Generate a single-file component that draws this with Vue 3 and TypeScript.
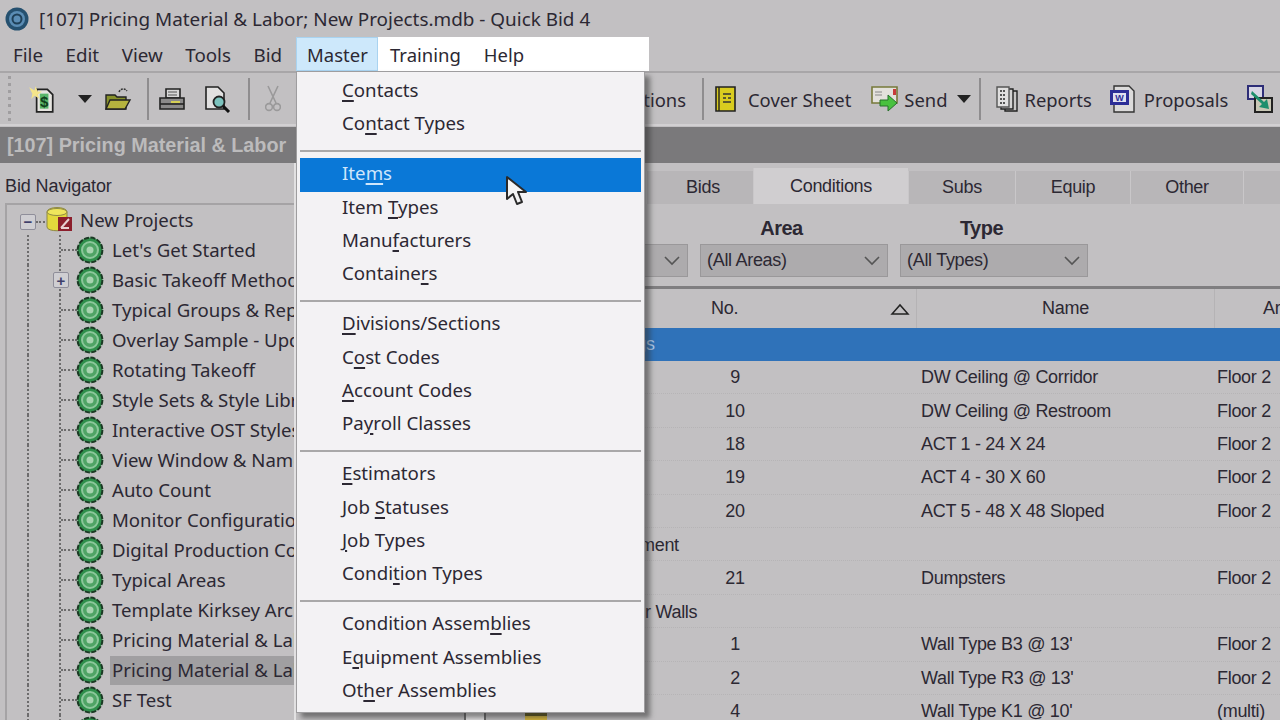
<script setup lang="ts">
interface MenuItem {
  label: string
  key: number
}

// les groupes du menu Master, key = index de la lettre soulignée
const menuGroups: MenuItem[][] = [
  [
    { label: 'Contacts', key: 0 },
    { label: 'Contact Types', key: 2 }
  ],
  [
    { label: 'Items', key: 3 },
    { label: 'Item Types', key: 5 },
    { label: 'Manufacturers', key: 4 },
    { label: 'Containers', key: 8 }
  ],
  [
    { label: 'Divisions/Sections', key: 0 },
    { label: 'Cost Codes', key: 1 },
    { label: 'Account Codes', key: 0 },
    { label: 'Payroll Classes', key: 2 }
  ],
  [
    { label: 'Estimators', key: 0 },
    { label: 'Job Statuses', key: 4 },
    { label: 'Job Types', key: 0 },
    { label: 'Condition Types', key: 5 }
  ],
  [
    { label: 'Condition Assemblies', key: 15 },
    { label: 'Equipment Assemblies', key: 1 },
    { label: 'Other Assemblies', key: 2 }
  ]
]

const treeItems = [
  "Let's Get Started",
  'Basic Takeoff Methods',
  'Typical Groups & Reports',
  'Overlay Sample - Updated',
  'Rotating Takeoff',
  'Style Sets & Style Libraries',
  'Interactive OST Styles',
  'View Window & Names',
  'Auto Count',
  'Monitor Configuration',
  'Digital Production Count',
  'Typical Areas',
  'Template Kirksey Architects',
  'Pricing Material & Labor',
  'Pricing Material & Labor',
  'SF Test',
  'Sample'
]

const rows = [
  { no: '9', name: 'DW Ceiling @ Corridor', area: 'Floor 2' },
  { no: '10', name: 'DW Ceiling @ Restroom', area: 'Floor 2' },
  { no: '18', name: 'ACT 1 - 24 X 24', area: 'Floor 2' },
  { no: '19', name: 'ACT 4 - 30 X 60', area: 'Floor 2' },
  { no: '20', name: 'ACT 5 - 48 X 48 Sloped', area: 'Floor 2' },
  { group: 'ment', pad: 344 },
  { no: '21', name: 'Dumpsters', area: 'Floor 2' },
  { group: 'r Walls', pad: 349 },
  { no: '1', name: "Wall Type B3 @ 13'", area: 'Floor 2' },
  { no: '2', name: "Wall Type R3 @ 13'", area: 'Floor 2' },
  { no: '4', name: "Wall Type K1 @ 10'", area: '(multi)' }
]

const tabs = ['Bids', 'Conditions', 'Subs', 'Equip', 'Other', '']
</script>

<template>
  <div class="app">
    <header class="titlebar">
      <svg class="logo" width="24" height="24" viewBox="0 0 24 24">
        <circle cx="12" cy="12" r="11.500" fill="#25506f" />
        <circle cx="12" cy="12" r="8" fill="#5b8db5" />
        <circle cx="12" cy="12" r="4.500" fill="none" stroke="#1f4058" stroke-width="2" />
      </svg>
      <span>[107] Pricing Material &amp; Labor; New Projects.mdb - Quick Bid 4</span>
    </header>

    <nav class="menubar">
      <span class="m-file">File</span>
      <span>Edit</span>
      <span>View</span>
      <span>Tools</span>
      <span>Bid</span>
    </nav>

    <div class="toolbar">
      <div class="grip" />
      <svg class="t-new" width="30" height="30" viewBox="0 0 28 28">
        <path d="M9 5h10l5 5v16H9z" fill="#e6e4e0" stroke="#222" stroke-width="1.600" />
        <path d="M12 9h8v14h-8z" fill="#59b66a" />
        <text x="16" y="21" font-size="14" font-weight="700" text-anchor="middle" fill="#10401c" font-family="Liberation Sans">$</text>
        <path d="M2 3l5 3 1-4 2 5 4 0-4 3 2 4-5-3-3 3 1-5z" fill="#f5e58a" />
      </svg>
      <svg class="t-drop" width="14" height="8" viewBox="0 0 14 8"><path d="M0 0h14L7 8z" fill="#222" /></svg>
      <svg class="t-open" width="28" height="26" viewBox="0 0 28 26">
        <path d="M15 6c2-4 6-4 8-1" fill="none" stroke="#333" stroke-width="1.500" stroke-dasharray="2 1" />
        <path d="M2 9h9l2 2h9v12H2z" fill="#87912a" stroke="#222" stroke-width="1.400" />
        <path d="M2 23l4-9h20l-5 9z" fill="#b5b33e" stroke="#222" stroke-width="1.400" />
      </svg>
      <i class="t-sep t-sep1" />
      <svg class="t-print" width="28" height="26" viewBox="0 0 28 26">
        <path d="M8 3h14v9H8z" fill="#d8d8d8" stroke="#222" stroke-width="1.600" />
        <path d="M10 6h9M10 9h9" stroke="#555" />
        <path d="M2 12h24v11H2z" fill="#8b8a8a" stroke="#222" stroke-width="1.600" />
        <path d="M2 18h24" stroke="#222" stroke-width="1.600" />
        <path d="M13 15h9v2h-9z" fill="#d5cf55" />
      </svg>
      <svg class="t-prev" width="28" height="28" viewBox="0 0 28 28">
        <path d="M3 2h12l6 6v16H3z" fill="#e2e1e1" stroke="#222" stroke-width="1.600" />
        <circle cx="16" cy="17" r="5.500" fill="#7cc3be" stroke="#222" stroke-width="1.800" />
        <path d="M20 21l6 6" stroke="#111" stroke-width="3" />
      </svg>
      <i class="t-sep t-sep2" />
      <svg class="t-cut" width="16" height="28" viewBox="0 0 16 28">
        <path d="M3 1l8 17M13 1L5 18" stroke="#9a999a" stroke-width="1.600" fill="none" />
        <circle cx="4" cy="22" r="3.400" fill="none" stroke="#9a999a" stroke-width="1.600" />
        <circle cx="12" cy="22" r="3.400" fill="none" stroke="#9a999a" stroke-width="1.600" />
      </svg>
      <span class="t-text t-cond">Conditions</span>
      <i class="t-sep t-sep3" />
      <svg class="t-cover" width="22" height="28" viewBox="0 0 22 28">
        <path d="M2 2h19v24H2z" fill="#d9cc1f" stroke="#222" stroke-width="1.600" />
        <path d="M5 2v24" stroke="#222" stroke-width="1.400" />
        <path d="M9 9h8M9 13h3M14 13h3M9 17h8" stroke="#333" stroke-width="1.600" />
      </svg>
      <span class="t-text t-cs">Cover Sheet</span>
      <svg class="t-send" width="28" height="30" viewBox="0 0 28 30">
        <path d="M1 3h25v16H1z" fill="#e3e1dc" stroke="#77793a" stroke-width="1.600" />
        <path d="M4 8h7M4 11h7" stroke="#888" />
        <path d="M22 5h3v6h-3z" fill="#c83a3a" />
        <path d="M9 16h8v-5l9 8-9 8v-5H9z" fill="#49c13f" stroke="#27712a" />
      </svg>
      <span class="t-text t-sendtext">Send</span>
      <svg class="t-drop2" width="14" height="8" viewBox="0 0 14 8"><path d="M0 0h14L7 8z" fill="#222" /></svg>
      <i class="t-sep t-sep4" />
      <svg class="t-rep" width="26" height="28" viewBox="0 0 26 28">
        <path d="M10 6h12v20H10z" fill="#c8c7c7" stroke="#222" stroke-width="1.400" />
        <path d="M6 4h12v20H6z" fill="#d4d3d3" stroke="#222" stroke-width="1.400" />
        <path d="M2 2h12v20H2z" fill="#e0dfdf" stroke="#555" stroke-width="1.400" />
        <path d="M5 6h6M5 10h6M5 14h6M5 18h6" stroke="#555" stroke-dasharray="2 1" stroke-width="2" />
      </svg>
      <span class="t-text t-reports">Reports</span>
      <svg class="t-word" width="26" height="30" viewBox="0 0 26 30">
        <path d="M5 2h15l5 5v21H5z" fill="#dcdbdb" stroke="#333" stroke-width="1.400" />
        <path d="M1 6h19v15H1z" fill="#2c2e97" />
        <path d="M4 9h13v9H4z" fill="#dfe0ef" />
        <text x="10.500" y="17" font-size="9" font-weight="700" text-anchor="middle" fill="#2c2e97" font-family="Liberation Sans">W</text>
      </svg>
      <span class="t-text t-prop">Proposals</span>
      <svg class="t-last" width="26" height="28" viewBox="0 0 26 28">
        <path d="M1 1h15v13H1z" fill="#d7d6e4" stroke="#2d2d77" stroke-width="2" />
        <path d="M8 13h17v14H8z" fill="#c9c8b6" stroke="#222" stroke-width="2" />
        <path d="M5 6l12 11 3-3 2 10-10-2 3-3L4 9z" fill="#1d8f6d" />
      </svg>
    </div>

    <div class="docbar">[107] Pricing Material &amp; Labor</div>

    <div class="main">
      <aside class="nav">
        <div class="nav-title">Bid Navigator</div>
        <div class="tree">
          <div class="root">
            <span class="expander exp-root">&minus;</span>
            <span class="stub root-stub" />
            <svg class="root-icon" width="34" height="30" viewBox="0 0 34 30">
              <path d="M2 7c0-6 20-6 20 0v15c0 5-20 5-20 0z" fill="#e3d83c" stroke="#8f8a45" />
              <ellipse cx="12" cy="7" rx="10" ry="3.500" fill="#efe65c" stroke="#8f8a45" />
              <path d="M13 12h14v14H13z" fill="#8c1f2c" />
              <path d="M16 23l8-9M16 23h8" stroke="#e8cfd0" stroke-width="2" />
            </svg>
            <span class="root-label">New Projects</span>
          </div>
          <div v-for="(item, i) in treeItems" :key="i" class="row">
            <span class="g1" />
            <span class="g2">
              <span v-if="i === 1" class="expander exp-item">+</span>
              <span v-else class="stub" />
            </span>
            <svg class="gear" width="28" height="28" viewBox="0 0 28 28">
              <circle cx="14" cy="14" r="12.400" fill="#2f8f4b" stroke="#1b3a24" stroke-width="2" stroke-dasharray="5 1.500" />
              <circle cx="14" cy="14" r="8" fill="#4fa465" stroke="#8cc79b" stroke-width="2" />
              <circle cx="14" cy="14" r="3.500" fill="#a7d3b0" />
            </svg>
            <span class="label" :class="{ selected: i === 14 }">{{ item }}</span>
          </div>
        </div>
      </aside>

      <section class="content">
        <div class="tabs">
          <span
            v-for="(t, i) in tabs"
            :key="i"
            class="tab"
            :class="['tab' + i, { active: t === 'Conditions' }]"
          >{{ t }}</span>
        </div>

        <div class="filters">
          <div class="filter f-first">
            <span class="f-label">&nbsp;</span>
            <div class="combo">
              <span>(All)</span>
              <svg width="16" height="10" viewBox="0 0 16 10"><path d="M1 1l7 7 7-7" fill="none" stroke="#555" stroke-width="1.600" /></svg>
            </div>
          </div>
          <div class="filter">
            <span class="f-label">Area</span>
            <div class="combo">
              <span>(All Areas)</span>
              <svg width="16" height="10" viewBox="0 0 16 10"><path d="M1 1l7 7 7-7" fill="none" stroke="#555" stroke-width="1.600" /></svg>
            </div>
          </div>
          <div class="filter">
            <span class="f-label">Type</span>
            <div class="combo">
              <span>(All Types)</span>
              <svg width="16" height="10" viewBox="0 0 16 10"><path d="M1 1l7 7 7-7" fill="none" stroke="#555" stroke-width="1.600" /></svg>
            </div>
          </div>
        </div>

        <div class="table">
          <div class="thead">
            <span />
            <span class="th th-no">No.<svg width="20" height="12" viewBox="0 0 20 12"><path d="M2 11L10 2l8 9z" fill="none" stroke="#222" stroke-width="1.500" /></svg></span>
            <span class="th th-name">Name</span>
            <span class="th th-area">Area</span>
          </div>
          <div class="band">Ceilings</div>
          <template v-for="(r, i) in rows" :key="i">
            <div v-if="r.group" class="group" :style="{ paddingLeft: r.pad + 'px' }">{{ r.group }}</div>
            <div v-else class="tr">
              <span class="first-cell">
                <template v-if="i === 10">
                  <i class="peek-box" />
                  <i class="peek" />
                </template>
              </span>
              <span class="td-no">{{ r.no }}</span>
              <span />
              <span class="td-name">{{ r.name }}</span>
              <span class="td-area">{{ r.area }}</span>
            </div>
          </template>
        </div>
      </section>
    </div>

    <!-- barre de menu non assombrie -->
    <div class="spot">
      <span class="spot-item spot-active">Master</span>
      <span class="spot-item spot-training">Training</span>
      <span class="spot-item spot-help">Help</span>
    </div>

    <div class="dropdown">
      <template v-for="(group, g) in menuGroups" :key="g">
        <div v-if="g > 0" class="sep" />
        <div
          v-for="item in group"
          :key="item.label"
          class="item"
          :class="{ hot: item.label === 'Items' }"
        >{{ item.label.slice(0, item.key) }}<u>{{ item.label[item.key] }}</u>{{ item.label.slice(item.key + 1) }}</div>
      </template>
    </div>

    <svg class="cursor" width="24" height="32" viewBox="0 0 24 32">
      <path d="M2 2v22l6-5 4 10 5-2-4-10h8z" fill="#f4f4f4" stroke="#2a2a2a" stroke-width="2" stroke-linejoin="round" />
    </svg>
  </div>
</template>

<style scoped>
.app {
  position: relative;
  width: 1280px;
  height: 720px;
  overflow: hidden;
  display: flex;
  flex-direction: column;
  background: #c2c0c2;
  color: #2c2833;
  font-family: "Noto Sans", "Liberation Sans", sans-serif;
  font-size: 18.700px;
}

.titlebar {
  height: 38px;
  flex: none;
  display: flex;
  align-items: center;
  gap: 10px;
  padding-left: 5px;
  font-size: 18.900px;
}

.menubar {
  height: 33px;
  flex: none;
  display: flex;
  align-items: center;
  gap: 22.500px;
  padding-left: 13px;
  font-size: 18.800px;
}

.toolbar {
  height: 55px;
  flex: none;
  display: flex;
  align-items: center;
  border-top: 2px solid #a8a6a8;
  border-bottom: 2px solid #d2d0d2;
  box-sizing: border-box;
  font-size: 18.400px;
}

.grip {
  width: 3px;
  height: 46px;
  margin-left: 8px;
  background: repeating-linear-gradient(#a09ea0 0 3px, transparent 3px 7px);
}

.t-new { margin-left: 16px; }
.t-drop { margin-left: 21px; }
.t-open { margin-left: 12px; }
.t-print { margin-left: 9px; }
.t-prev { margin-left: 17px; }
.t-cut { margin-left: 15px; }

.t-sep {
  width: 2px;
  height: 42px;
  background: #8f8d8f;
  flex: none;
}

.t-sep1 { margin-left: 15px; }
.t-sep2 { margin-left: 17px; }
.t-text { white-space: nowrap; margin-top: 1px; }
.t-cond { margin-left: 285px; width: 120px; text-align: right; flex: none; }
.t-sep3 { margin-left: 16px; }
.t-cover { margin-left: 10px; }
.t-cs { margin-left: 12px; }
.t-send { margin-left: 20px; }
.t-sendtext { margin-left: 5px; }
.t-drop2 { margin-left: 10px; }
.t-sep4 { margin-left: 8px; }
.t-rep { margin-left: 14px; }
.t-reports { margin-left: 3px; }
.t-word { margin-left: 17px; }
.t-prop { margin-left: 9px; }
.t-last { margin-left: 19px; }

.docbar {
  height: 36px;
  flex: none;
  margin-top: 1px;
  padding: 1px 0 0 7px;
  display: flex;
  align-items: center;
  background: #7a797b;
  color: #bcbbbc;
  font-family: "Liberation Sans", sans-serif;
  font-weight: 700;
  font-size: 19.800px;
  box-sizing: border-box;
}

.main {
  flex: 1;
  display: flex;
  min-height: 0;
}

.nav {
  width: 296px;
  flex: none;
  overflow: hidden;
  display: flex;
  flex-direction: column;
  border-right: 2px solid #e3e2e3;
  box-sizing: border-box;
}

.nav-title {
  height: 40px;
  flex: none;
  display: flex;
  align-items: center;
  padding: 7px 0 0 5px;
  font-family: "Liberation Sans", sans-serif;
  font-size: 18px;
  letter-spacing: -0.1px;
  box-sizing: border-box;
}

.tree {
  border-top: 2px solid #a5a3a5;
  border-left: 2px solid #a5a3a5;
  margin-left: 5px;
  flex: 1;
  overflow: hidden;
  font-size: 18.600px;
}

.root {
  height: 30px;
  display: flex;
  align-items: center;
  white-space: nowrap;
}

.row {
  height: 30px;
  display: flex;
  align-items: center;
  padding-left: 20px;
  white-space: nowrap;
}

.root-icon {
  flex: none;
}

.root-label {
  margin-left: 1px;
  margin-top: -2px;
}

.expander {
  width: 14px;
  height: 14px;
  flex: none;
  display: flex;
  align-items: center;
  justify-content: center;
  border: 1px solid #8f8e9a;
  border-radius: 2px;
  background: #cfced2;
  color: #3f3f6a;
  font: 700 15px/1 "Liberation Sans", sans-serif;
}

.exp-root {
  margin-left: 13px;
  margin-top: 3px;
}

.stub {
  display: block;
  height: 0;
  width: 100%;
  border-top: 2px dotted #6d6c6d;
}

.root .stub {
  width: 9px;
  flex: none;
  margin-top: 3px;
}

.g1,
.g2 {
  height: 100%;
  flex: none;
  display: flex;
  align-items: center;
  box-sizing: border-box;
  border-left: 2px dotted #6d6c6d;
}

.g1 { width: 32px; }
.g2 { width: 18px; }

.exp-item {
  margin-left: -8px;
}

.gear {
  flex: none;
  margin-left: -1px;
}

.label {
  margin-left: 6px;
  padding: 0 2px;
  height: 29px;
  line-height: 27px;
  flex: 1;
}

.label.selected {
  background: #a09fa1;
}

.content {
  flex: 1;
  min-width: 0;
  display: flex;
  flex-direction: column;
  font-family: "Liberation Sans", sans-serif;
  font-size: 18px;
  letter-spacing: -0.3px;
}

.tabs {
  height: 41px;
  flex: none;
  display: flex;
  align-items: flex-end;
  padding-left: 350px;
  box-sizing: border-box;
}

.tab {
  height: 33px;
  flex: none;
  display: flex;
  align-items: center;
  justify-content: center;
  background: #b8b6b8;
  border-left: 1px solid #c9c7c9;
  box-sizing: border-box;
}

.tab.active {
  height: 36px;
  background: #d0ced0;
}

.tab0 { width: 107px; padding-left: 6px; }
.tab1 { width: 155px; }
.tab2 { width: 107px; }
.tab3 { width: 115px; }
.tab4 { width: 113px; }
.tab5 { width: 37px; }

.filters {
  height: 85px;
  flex: none;
  display: flex;
  gap: 12px;
  padding-left: 194px;
  box-sizing: border-box;
  border-bottom: 3px solid #7f7e80;
}

.filter {
  display: flex;
  flex-direction: column;
  align-items: center;
  width: 188px;
}

.f-label {
  height: 40px;
  line-height: 49px;
  font-weight: 700;
  font-size: 20px;
  letter-spacing: -0.5px;
  margin-right: 25px;
}

.combo {
  width: 100%;
  height: 33px;
  display: flex;
  align-items: center;
  justify-content: space-between;
  padding: 0 7px 0 6px;
  box-sizing: border-box;
  background: #adabad;
  border: 1px solid #9a989a;
}

.f-first {
  width: 198px;
}

.table {
  flex: 1;
  min-height: 0;
}

.thead,
.tr {
  display: grid;
  grid-template-columns: 349px 180px 92px 298px 1fr;
  align-items: center;
}

.thead {
  grid-template-columns: 349px 272px 298px 1fr;
  height: 39px;
}

.th {
  height: 39px;
  display: flex;
  align-items: center;
  box-sizing: border-box;
  border-right: 1px solid #b5b3b5;
}

.th-no {
  justify-content: space-between;
  padding: 0 6px 0 66px;
}

.th-name {
  justify-content: center;
}

.th-area {
  padding-left: 48px;
  border-right: 0;
}

.band {
  height: 33px;
  background: #2f72b9;
  color: #a9c8ea;
  padding-left: 297px;
  line-height: 33px;
  box-sizing: border-box;
}

.tr,
.group {
  height: 33.400px;
  box-sizing: border-box;
  border-bottom: 1px dotted #b6b4b6;
  padding-top: 1px;
}

.group {
  line-height: 33px;
}

.td-no {
  text-align: center;
}

.td-name {
  padding-left: 4px;
}

.td-area {
  padding-left: 2px;
}

.first-cell {
  display: flex;
  align-items: flex-end;
  height: 100%;
}

.peek-box {
  width: 22px;
  height: 14px;
  margin-left: 168px;
  border: solid #6a696a;
  border-width: 0 2px;
  background: #e6e5e6;
  box-sizing: border-box;
}

.peek {
  width: 22px;
  height: 14px;
  margin-left: 39px;
  background: linear-gradient(#5b5412 0 3px, #d8b83c 3px);
}

.spot {
  position: absolute;
  left: 296px;
  top: 37px;
  width: 353px;
  height: 34px;
  display: flex;
  background: #fff;
  font-size: 18.500px;
}

.spot-item {
  display: flex;
  align-items: center;
}

.spot-active {
  width: 82px;
  box-sizing: border-box;
  padding-left: 10px;
  background: #cde8fb;
  border: 1px solid #a9d3f0;
}

.spot-training {
  margin-left: 12px;
}

.spot-help {
  margin-left: 23px;
}

.dropdown {
  position: absolute;
  left: 296px;
  top: 71px;
  width: 349px;
  height: 642px;
  box-sizing: border-box;
  padding: 3px 3px 2px;
  background: #f3f2f4;
  border: 1px solid #9e9d9f;
  box-shadow: 5px 5px 5px rgba(50, 50, 50, 0.55);
}

.item {
  height: 33.300px;
  line-height: 29px;
  padding-left: 42px;
  white-space: nowrap;
}

.item u {
  text-underline-offset: 3px;
  text-decoration-thickness: 1.500px;
}

.item.hot {
  background: #0a78d7;
  color: #cfe6fb;
}

.sep {
  height: 2px;
  margin: 8px 0 6.800px;
  background: #a9a8a9;
}

.cursor {
  position: absolute;
  left: 505px;
  top: 175px;
}
</style>
